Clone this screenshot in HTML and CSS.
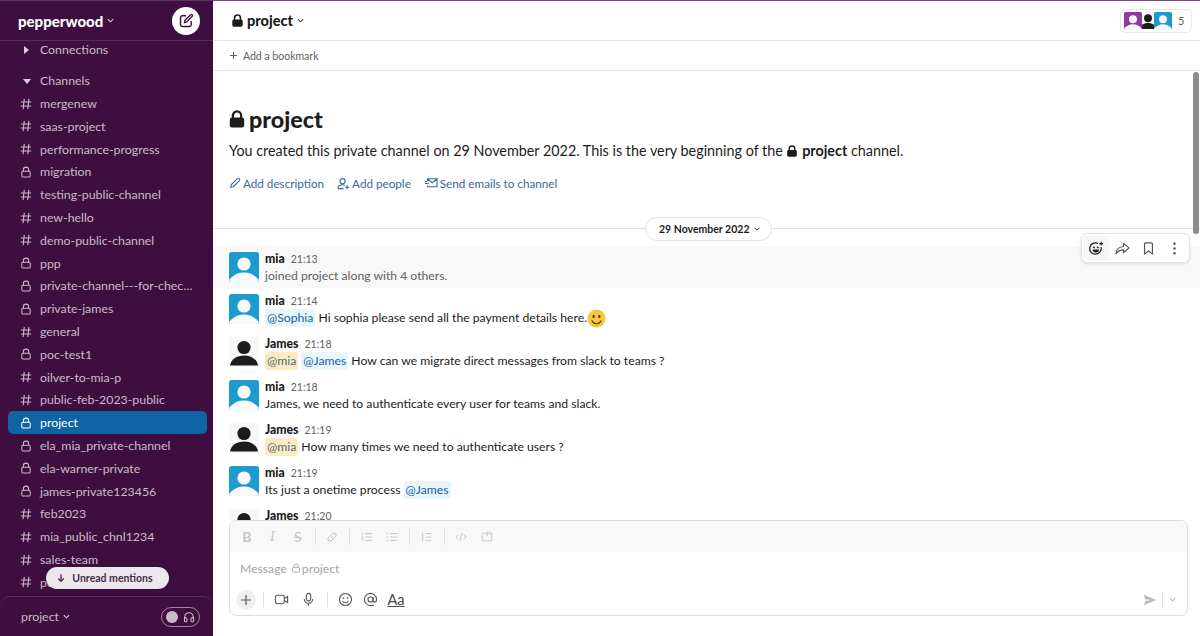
FILE: index.html
```html
<!DOCTYPE html>
<html lang="en">
<head>
<meta charset="utf-8">
<title>project</title>
<link rel="stylesheet" href="styles.css">
</head>
<body>
<svg class="defs" width="0" height="0" aria-hidden="true">
  <symbol id="hash" viewBox="0 0 14 14"><path d="M5 1 3.600 13M10.400 1 9 13M1 4.700h12M1 9.300h12" fill="none" stroke="currentColor" stroke-width="1.250"/></symbol>
  <symbol id="lock" viewBox="0 0 14 14"><path d="M3.900 6V4.400a3.100 3.100 0 0 1 6.200 0V6" fill="none" stroke="currentColor" stroke-width="1.200"/><rect x="2.100" y="6" width="9.800" height="6.900" rx="1.600" fill="none" stroke="currentColor" stroke-width="1.200"/></symbol>
  <symbol id="lockf" viewBox="0 0 14 14"><path d="M3.800 6.500V4.300a3.200 3.200 0 0 1 6.400 0v2.200" fill="none" stroke="currentColor" stroke-width="1.700"/><rect x="1.400" y="5.800" width="11.200" height="7.800" rx="1.700" fill="currentColor"/></symbol>
  <symbol id="chev" viewBox="0 0 10 10"><path d="M2 3.500 5 6.500 8 3.500" fill="none" stroke="currentColor" stroke-width="1.200"/></symbol>
  <symbol id="ava-blue" viewBox="0 0 30 30"><rect width="30" height="30" rx="2.500" fill="#1d9bd1"/><circle cx="15" cy="12" r="6.600" fill="#f8f8f8"/><path d="M0 28c4-5 9-7.500 15-7.500S26 23 30 28v0a2.500 2.500 0 0 1-2.500 2H2.500A2.500 2.500 0 0 1 0 28Z" fill="#f8f8f8"/></symbol>
  <symbol id="ava-purple" viewBox="0 0 30 30"><rect width="30" height="30" rx="2.500" fill="#8f3aa0"/><circle cx="15" cy="12" r="6.600" fill="#f8f8f8"/><path d="M0 28c4-5 9-7.500 15-7.500S26 23 30 28v0a2.500 2.500 0 0 1-2.500 2H2.500A2.500 2.500 0 0 1 0 28Z" fill="#f8f8f8"/></symbol>
  <symbol id="ava-black" viewBox="0 0 30 30"><rect width="30" height="30" rx="2.500" fill="#f8f8f8"/><circle cx="15" cy="10.500" r="6.600" fill="#1d1c1d"/><path d="M1 28.500C2 22 8 18.500 15 18.500S28 22 29 28.500Z" fill="#1d1c1d"/></symbol>
</svg>

<div class="app">
  <aside class="sidebar">
    <header class="side-head">
      <span class="workspace">pepperwood</span>
      <svg class="ws-chev"><use href="#chev"/></svg>
      <button class="compose" aria-label="New message">
        <svg viewBox="0 0 16 16" width="16" height="16"><path d="M8 2.800H4.200A1.700 1.700 0 0 0 2.500 4.500v7.300a1.700 1.700 0 0 0 1.700 1.700h7.300a1.700 1.700 0 0 0 1.700-1.700V8" fill="none" stroke="#3f0e40" stroke-width="1.400"/><path d="M6.500 9.600 7 7.200 12.600 1.700a1 1 0 0 1 1.500 0 1 1 0 0 1 .1 1.500L8.800 9Z" fill="none" stroke="#3f0e40" stroke-width="1.300"/></svg>
      </button>
    </header>
    <nav class="channels">
      <div class="row section first"><span class="tri right"></span><span>Connections</span></div>
      <div class="row section"><span class="tri down"></span><span>Channels</span></div>
      <div class="row"><svg class="ic"><use href="#hash"/></svg><span>mergenew</span></div>
      <div class="row"><svg class="ic"><use href="#hash"/></svg><span>saas-project</span></div>
      <div class="row"><svg class="ic"><use href="#hash"/></svg><span>performance-progress</span></div>
      <div class="row"><svg class="ic"><use href="#lock"/></svg><span>migration</span></div>
      <div class="row"><svg class="ic"><use href="#hash"/></svg><span>testing-public-channel</span></div>
      <div class="row"><svg class="ic"><use href="#hash"/></svg><span>new-hello</span></div>
      <div class="row"><svg class="ic"><use href="#hash"/></svg><span>demo-public-channel</span></div>
      <div class="row"><svg class="ic"><use href="#lock"/></svg><span>ppp</span></div>
      <div class="row"><svg class="ic"><use href="#lock"/></svg><span class="clip">private-channel---for-checking-all</span></div>
      <div class="row"><svg class="ic"><use href="#lock"/></svg><span>private-james</span></div>
      <div class="row"><svg class="ic"><use href="#hash"/></svg><span>general</span></div>
      <div class="row"><svg class="ic"><use href="#lock"/></svg><span>poc-test1</span></div>
      <div class="row"><svg class="ic"><use href="#hash"/></svg><span>oilver-to-mia-p</span></div>
      <div class="row"><svg class="ic"><use href="#hash"/></svg><span>public-feb-2023-public</span></div>
      <div class="row active"><svg class="ic"><use href="#lock"/></svg><span>project</span></div>
      <div class="row"><svg class="ic"><use href="#lock"/></svg><span>ela_mia_private-channel</span></div>
      <div class="row"><svg class="ic"><use href="#lock"/></svg><span>ela-warner-private</span></div>
      <div class="row"><svg class="ic"><use href="#lock"/></svg><span>james-private123456</span></div>
      <div class="row"><svg class="ic"><use href="#hash"/></svg><span>feb2023</span></div>
      <div class="row"><svg class="ic"><use href="#hash"/></svg><span>mia_public_chnl1234</span></div>
      <div class="row"><svg class="ic"><use href="#hash"/></svg><span>sales-team</span></div>
      <div class="row"><svg class="ic"><use href="#hash"/></svg><span>pepper-team</span></div>
    </nav>
    <button class="unread">
      <svg viewBox="0 0 10 10" width="10" height="10"><path d="M5 1.200v7M2.200 5.500 5 8.300l2.800-2.800" fill="none" stroke="currentColor" stroke-width="1.300"/></svg>
      <span>Unread mentions</span>
    </button>
    <footer class="huddle">
      <span class="huddle-name">project</span>
      <svg class="ws-chev small"><use href="#chev"/></svg>
      <span class="toggle">
        <span class="knob"></span>
        <svg viewBox="0 0 14 14" width="12" height="12"><path d="M2 9V7a5 5 0 0 1 10 0v2" fill="none" stroke="currentColor" stroke-width="1.300"/><rect x="1.700" y="8" width="3" height="4.500" rx="1.200" fill="none" stroke="currentColor" stroke-width="1.200"/><rect x="9.300" y="8" width="3" height="4.500" rx="1.200" fill="none" stroke="currentColor" stroke-width="1.200"/></svg>
      </span>
    </footer>
  </aside>

  <main class="main">
    <header class="chan-head">
      <svg class="head-lock"><use href="#lockf"/></svg>
      <span class="chan-name">project</span>
      <svg class="head-chev"><use href="#chev"/></svg>
      <div class="members">
        <svg class="m-ava purple"><use href="#ava-purple"/></svg>
        <svg class="m-ava"><use href="#ava-black"/></svg>
        <svg class="m-ava"><use href="#ava-blue"/></svg>
        <span class="m-count">5</span>
      </div>
    </header>
    <div class="bookmarks">
      <svg viewBox="0 0 10 10" width="9" height="9"><path d="M5 1v8M1 5h8" fill="none" stroke="currentColor" stroke-width="1.200"/></svg>
      <span>Add a bookmark</span>
    </div>
    <section class="scroller">
      <div class="intro">
        <h1 class="intro-title"><svg class="title-lock"><use href="#lockf"/></svg>project</h1>
        <p class="intro-text">You created this private channel on 29 November 2022. This is the very beginning of the <svg class="inline-lock"><use href="#lockf"/></svg> <b>project</b> channel.</p>
        <div class="actions">
          <a class="action"><svg viewBox="0 0 14 14" width="12" height="12"><path d="M2 12 2.700 8.800 9.800 1.900a1.300 1.300 0 0 1 1.900 0l.5.500a1.300 1.300 0 0 1 0 1.800L5.100 11.300Z" fill="none" stroke="currentColor" stroke-width="1.200"/></svg>Add description</a>
          <a class="action"><svg viewBox="0 0 14 14" width="13" height="13"><circle cx="6" cy="4.500" r="2.800" fill="none" stroke="currentColor" stroke-width="1.200"/><path d="M1 12.500c.2-2.800 2.200-4.200 5-4.200 1 0 1.900.2 2.600.5M1 12.500h6M10.800 8.800v4.400M8.600 11h4.400" fill="none" stroke="currentColor" stroke-width="1.200"/></svg>Add people</a>
          <a class="action"><svg viewBox="0 0 14 14" width="14" height="14"><path d="M3.500 5V2.800h9.500v8H3.500V9.500M3.500 3l4.700 3.800L13 3M.8 7.500h4M1 5.500h2" fill="none" stroke="currentColor" stroke-width="1.100"/></svg>Send emails to channel</a>
        </div>
      </div>
      <div class="day"><span class="day-pill">29 November 2022<svg class="day-chev"><use href="#chev"/></svg></span></div>
      <article class="msg hover">
        <svg class="avatar"><use href="#ava-blue"/></svg>
        <div class="body"><div class="meta"><b>mia</b><time>21:13</time></div><div class="text muted">joined project along with 4 others.</div></div>
      </article>
      <article class="msg">
        <svg class="avatar"><use href="#ava-blue"/></svg>
        <div class="body"><div class="meta"><b>mia</b><time>21:14</time></div><div class="text"><span class="mention">@Sophia</span> Hi sophia please send all the payment details here.<svg class="emoji" viewBox="0 0 20 20"><circle cx="10" cy="10" r="9.500" fill="#f7c740"/><ellipse cx="7" cy="7.800" rx="1.200" ry="1.700" fill="#5a3d10"/><ellipse cx="13" cy="7.800" rx="1.200" ry="1.700" fill="#5a3d10"/><path d="M5 12c1.200 2.600 3 3.500 5 3.500s3.800-.9 5-3.500" fill="none" stroke="#5a3d10" stroke-width="1.200"/></svg></div></div>
      </article>
      <article class="msg">
        <svg class="avatar"><use href="#ava-black"/></svg>
        <div class="body"><div class="meta"><b>James</b><time>21:18</time></div><div class="text"><span class="mention self">@mia</span> <span class="mention">@James</span> How can we migrate direct messages from slack to teams ?</div></div>
      </article>
      <article class="msg">
        <svg class="avatar"><use href="#ava-blue"/></svg>
        <div class="body"><div class="meta"><b>mia</b><time>21:18</time></div><div class="text">James, we need to authenticate every user for teams and slack.</div></div>
      </article>
      <article class="msg">
        <svg class="avatar"><use href="#ava-black"/></svg>
        <div class="body"><div class="meta"><b>James</b><time>21:19</time></div><div class="text"><span class="mention self">@mia</span> How many times we need to authenticate users ?</div></div>
      </article>
      <article class="msg">
        <svg class="avatar"><use href="#ava-blue"/></svg>
        <div class="body"><div class="meta"><b>mia</b><time>21:19</time></div><div class="text">Its just a onetime process <span class="mention">@James</span></div></div>
      </article>
      <article class="msg">
        <svg class="avatar"><use href="#ava-black"/></svg>
        <div class="body"><div class="meta"><b>James</b><time>21:20</time></div></div>
      </article>
      <div class="scrollbar"></div>
      <div class="hover-tools">
        <span class="tool on"><svg viewBox="0 0 16 16" width="15" height="15"><path d="M12.800 6.500A6.100 6.100 0 1 1 9.500 2.500" fill="none" stroke="#1d1c1d" stroke-width="1.300"/><circle cx="5.300" cy="6.800" r="1" fill="#1d1c1d"/><circle cx="9.300" cy="6.800" r="1" fill="#1d1c1d"/><path d="M3.900 9h6.800c0 2-1.500 3.300-3.400 3.300S3.900 11 3.900 9Z" fill="#1d1c1d"/><path d="M13 .8v4M11 2.800h4" fill="none" stroke="#1d1c1d" stroke-width="1.200"/></svg></span>
        <span class="tool"><svg viewBox="0 0 16 16" width="15" height="15"><path d="M9.200 2.500 15 7.400l-5.800 4.900V9.500C6 9.500 3.200 10.500 1 13.500c.4-4.700 3.600-7.300 8.200-7.600Z" fill="none" stroke="currentColor" stroke-width="1.200" stroke-linejoin="round"/></svg></span>
        <span class="tool"><svg viewBox="0 0 16 16" width="15" height="15"><path d="M3.800 14V3.300c0-.8.500-1.300 1.300-1.300h5.800c.8 0 1.300.5 1.300 1.300V14L8 10.500Z" fill="none" stroke="currentColor" stroke-width="1.300" stroke-linejoin="round"/></svg></span>
        <span class="tool"><svg viewBox="0 0 16 16" width="15" height="15"><circle cx="8" cy="3" r="1.300" fill="currentColor"/><circle cx="8" cy="8" r="1.300" fill="currentColor"/><circle cx="8" cy="13" r="1.300" fill="currentColor"/></svg></span>
      </div>
    </section>
    <section class="composer-wrap">
      <div class="composer">
        <div class="format">
          <span class="f-glyph bold">B</span>
          <span class="f-glyph ital">I</span>
          <span class="f-glyph strike">S</span>
          <i class="sep"></i>
          <svg class="f-ic" viewBox="0 0 14 14"><path d="M6 8 8.500 5.500M5.500 5 3 7.500a2.400 2.400 0 0 0 3.500 3.500L9 8.500M8.500 9 11 6.500A2.400 2.400 0 0 0 7.500 3L5 5.500" fill="none" stroke="currentColor" stroke-width="1.100"/></svg>
          <i class="sep"></i>
          <svg class="f-ic" viewBox="0 0 14 14"><path d="M5 3h8M5 7h8M5 11h8M1.500 2v2.500M1 7h1.500L1 9h2M1 11h1.500" fill="none" stroke="currentColor" stroke-width="1"/></svg>
          <svg class="f-ic" viewBox="0 0 14 14"><path d="M5 3h8M5 7h8M5 11h8M1 3h1.500M1 7h1.500M1 11h1.500" fill="none" stroke="currentColor" stroke-width="1"/></svg>
          <i class="sep"></i>
          <svg class="f-ic" viewBox="0 0 14 14"><path d="M2 2v10M5.500 3H12M5.500 7H12M5.500 11H12" fill="none" stroke="currentColor" stroke-width="1"/></svg>
          <i class="sep"></i>
          <svg class="f-ic" viewBox="0 0 14 14"><path d="M4 4 1 7l3 3M10 4l3 3-3 3M8.300 2.500 5.700 11.500" fill="none" stroke="currentColor" stroke-width="1"/></svg>
          <svg class="f-ic" viewBox="0 0 14 14"><path d="M1.500 5v6.500h11V3H9M5 3H1.500M7 1.500v4M5.500 2l1.500-.5L7 5.500M9.500 1v2" fill="none" stroke="currentColor" stroke-width="1"/></svg>
        </div>
        <div class="placeholder">Message <svg class="ph-lock"><use href="#lock"/></svg>project</div>
        <div class="compose-bar">
          <span class="plus"><svg viewBox="0 0 12 12" width="12" height="12"><path d="M6 1v10M1 6h10" fill="none" stroke="currentColor" stroke-width="1.200"/></svg></span>
          <i class="sep tall"></i>
          <svg class="b-ic" viewBox="0 0 16 16"><rect x="1.500" y="3.500" width="9.500" height="9" rx="2" fill="none" stroke="currentColor" stroke-width="1.200"/><path d="M11 7l3.500-2.200v6.400L11 9" fill="none" stroke="currentColor" stroke-width="1.200"/></svg>
          <svg class="b-ic mic" viewBox="0 0 16 16"><rect x="5.700" y="1.500" width="4.600" height="8" rx="2.300" fill="none" stroke="currentColor" stroke-width="1.200"/><path d="M3.500 7.500a4.500 4.500 0 0 0 9 0M8 12v2.500" fill="none" stroke="currentColor" stroke-width="1.200"/></svg>
          <i class="sep tall"></i>
          <svg class="b-ic" viewBox="0 0 16 16"><circle cx="8" cy="8" r="6.400" fill="none" stroke="currentColor" stroke-width="1.200"/><circle cx="5.800" cy="6.500" r=".9" fill="currentColor"/><circle cx="10.200" cy="6.500" r=".9" fill="currentColor"/><path d="M4.800 9.500c.8 1.500 2 2 3.200 2s2.400-.5 3.200-2" fill="none" stroke="currentColor" stroke-width="1.100"/></svg>
          <svg class="b-ic" viewBox="0 0 16 16"><circle cx="8" cy="8" r="2.700" fill="none" stroke="currentColor" stroke-width="1.200"/><path d="M10.700 5.300V9c0 1.200.8 1.800 1.600 1.800 1.100 0 2.200-1 2.200-2.800a6.500 6.500 0 1 0-3 5.500" fill="none" stroke="currentColor" stroke-width="1.200"/></svg>
          <span class="aa">Aa</span>
          <span class="send">
            <svg viewBox="0 0 16 16" width="14" height="14"><path d="M1 2 15 8 1 14l1.500-5L9 8 2.500 7Z" fill="#b9b9b9"/></svg>
            <i class="sep send-sep"></i>
            <svg class="send-chev"><use href="#chev"/></svg>
          </span>
        </div>
      </div>
    </section>
  </main>
</div>
</body>
</html>
```

FILE: styles.css
```css
* { box-sizing: border-box; }
html, body { margin: 0; height: 100%; overflow: hidden; }
body { font-family: Lato, "Liberation Sans", sans-serif; color: #1d1c1d; background: #fff; }
.defs { position: absolute; }
button { font: inherit; border: 0; padding: 0; }
svg { display: block; flex: none; }

.app { display: flex; width: 1200px; height: 636px; }

/* sidebar */
.sidebar { position: relative; width: 213px; flex: none; background: #3f0e40; color: rgba(255,255,255,.7); display: flex; flex-direction: column; }
.side-head { height: 41px; flex: none; display: flex; align-items: center; padding: 0 13px 0 18px; border-top: 1px solid #5b3a5c; border-bottom: 1px solid #553057; }
.workspace { color: #fff; font-weight: 900; font-size: 15px; }
.ws-chev { width: 9px; height: 9px; margin-left: 3px; color: #dccfdc; }
.compose { margin-left: auto; width: 28px; height: 28px; border-radius: 50%; background: #fff; display: flex; align-items: center; justify-content: center; }
.channels { flex: 1; min-height: 0; overflow: hidden; }
.row { height: 22.800px; display: flex; align-items: center; margin: 0 6px 0 8px; padding-left: 12px; font-size: 12.350px; gap: 8px; color: rgba(255,255,255,.72); }
.row > span:last-child { white-space: nowrap; }
.row .clip { overflow: hidden; text-overflow: ellipsis; max-width: 158px; }
.row .ic { width: 12px; height: 12px; color: rgba(255,255,255,.72); }
.row.active { background: #1164a3; border-radius: 5px; color: #fff; }
.row.active .ic { color: #fff; }
.section.first { height: 17px; margin-bottom: 11.400px; }
.tri { width: 12px; height: 10px; flex: none; position: relative; }
.tri::after { content: ""; position: absolute; border-style: solid; border-color: transparent; }
.tri.right::after { left: 4px; top: 1px; border-width: 4px 0 4px 5px; border-left-color: #d9cfd9; }
.tri.down::after { left: 3px; top: 3px; border-width: 5px 4px 0 4px; border-top-color: #d9cfd9; }

.unread { position: absolute; left: 46px; top: 567px; width: 123px; height: 22px; padding: 0 6px 1px 0; border-radius: 11px; background: #ece7ec; color: #4a2a4c; display: flex; align-items: center; justify-content: center; gap: 6px; font-size: 10.500px; font-weight: 700; }
.huddle { height: 40px; flex: none; margin-top: -1px; display: flex; align-items: center; padding: 0 13px 0 21px; background: #3f0e40; border-top: 1px solid #553057; border-radius: 10px 10px 0 0; position: relative; font-size: 12.350px; color: rgba(255,255,255,.72); }
.ws-chev.small { margin-left: 3px; }
.toggle { margin-left: auto; width: 39px; height: 20px; border: 1px solid rgba(255,255,255,.5); border-radius: 10px; display: flex; align-items: center; justify-content: space-between; padding: 0 4px; }
.knob { width: 12px; height: 12px; border-radius: 50%; background: #c9b9c9; }

/* main */
.main { flex: 1; min-width: 0; display: flex; flex-direction: column; border-top: 1px solid #7c4a80; }
.chan-head { height: 40px; flex: none; display: flex; align-items: center; padding: 0 8px 0 18px; border-bottom: 1px solid #e6e6e6; }
.head-lock { width: 13px; height: 13px; }
.chan-name { margin-left: 3px; font-size: 14.500px; font-weight: 900; }
.head-chev { width: 9px; height: 9px; margin-left: 3px; color: #444; }
.members { margin-left: auto; height: 24px; width: 72px; display: flex; align-items: center; padding-left: 3px; border: 1px solid #e8e8e8; border-radius: 5px; }
.m-ava { width: 18px; height: 18px; margin-left: -3px; }
.m-ava.purple { margin-left: 0; position: relative; z-index: 1; }
.m-count { margin-left: 6px; font-size: 11px; color: #616061; }
.bookmarks { height: 30px; flex: none; display: flex; align-items: center; gap: 5px; padding-left: 16px; font-size: 10.500px; color: #616061; border-bottom: 1px solid #e6e6e6; }

.scroller { position: relative; flex: 1; min-height: 0; overflow: hidden; }
.intro { padding: 35px 16px 0; height: 146px; }
.intro-title { margin: 0; display: flex; align-items: center; gap: 3px; font-size: 23.300px; line-height: 26px; font-weight: 900; }
.title-lock { width: 18px; height: 18px; margin-left: -1px; }
.intro-text { margin: 9px 0 0; font-size: 14.350px; line-height: 20px; color: #1d1c1d; }
.intro-text b { font-weight: 700; }
.inline-lock { display: inline-block; width: 12px; height: 12px; vertical-align: -1px; }
.actions { display: flex; gap: 13px; margin-top: 15px; }
.action { display: flex; align-items: center; gap: 2px; font-size: 11.700px; color: #35689b; }
.day { position: relative; height: 24px; display: flex; justify-content: center; }
.day::before { content: ""; position: absolute; left: 0; right: 0; top: 11px; border-top: 1px solid #e2e2e2; }
.day-pill { position: relative; height: 24px; width: 127px; margin-left: 4px; padding-left: 13px; display: flex; align-items: center; gap: 4px; background: #fff; border: 1px solid #e2e2e2; border-radius: 12px; font-size: 10.500px; font-weight: 700; color: #1d1c1d; }
.day-chev { width: 8px; height: 8px; }
.msg { display: flex; gap: 6px; padding: 6px 16px 0; height: 43px; }
.msg.hover { background: #f8f8f8; margin-top: 5px; height: 42px; }
.avatar { width: 30px; height: 30px; }
.body { min-width: 0; }
.meta { display: flex; align-items: baseline; gap: 6px; height: 14px; line-height: 14px; font-size: 12.200px; }
.meta b { font-weight: 900; }
.meta time { font-size: 10.500px; color: #616061; }
.text { white-space: pre-wrap; min-height: 20px; line-height: 20px; font-size: 12.200px; color: #1d1c1d; }
.text.muted { color: #616061; }
.mention { display: inline-block; padding: 0 2px; height: 18px; line-height: 18px; background: #e8f5fa; color: #1264a3; border-radius: 3px; }
.mention.self { background: #fcebc0; color: #4f6a80; }
.emoji { display: inline-block; width: 19px; height: 19px; vertical-align: -6px; }
.scrollbar { position: absolute; right: 1px; top: 1px; width: 6px; height: 162px; background: #8c8c8c; border-radius: 3px; }
.hover-tools { position: absolute; left: 868px; top: 162px; width: 109px; height: 30px; display: flex; align-items: center; padding: 1px; background: #fff; border: 1px solid #e2e2e2; border-radius: 6px; box-shadow: 0 1px 3px rgba(0,0,0,.1); }
.tool { width: 26px; height: 26px; display: flex; align-items: center; justify-content: center; color: #555; }
.tool.on { background: #f6f6f6; border-radius: 4px; color: #1d1c1d; }

/* composer */
.composer-wrap { flex: none; height: 116px; padding: 0 12px 20px 16px; }
.composer { height: 96px; border: 1px solid #dcdcdc; border-radius: 7px; overflow: hidden; display: flex; flex-direction: column; background: #fff; }
.format { height: 31px; flex: none; background: #f8f8f8; display: flex; align-items: center; padding-left: 4px; color: #bdbdbd; }
.f-glyph { width: 25.500px; flex: none; text-align: center; font-size: 14px; color: #c6c6c6; }
.bold { font-weight: 700; }
.ital { font-style: italic; font-family: "Liberation Serif", serif; }
.strike { text-decoration: line-through; font-weight: 400; }
.sep { display: block; width: 1px; height: 16px; background: #e0e0e0; flex: none; }
.format .sep { margin: 0 4px; }
.f-ic { width: 12px; height: 12px; margin: 0 6.750px; }
.placeholder { height: 32px; flex: none; display: flex; align-items: center; padding-left: 10px; font-size: 12.200px; color: #a3a3a3; }
.ph-lock { width: 10px; height: 10px; margin: 0 1px 0 4px; }
.compose-bar { flex: 1; display: flex; align-items: center; padding: 0 10px 0 6px; gap: 10px; color: #555; }
.plus { width: 20px; height: 20px; border-radius: 50%; background: #f0f0f0; display: flex; align-items: center; justify-content: center; }
.sep.tall { height: 15px; margin-left: -3px; }
.b-ic { width: 15px; height: 15px; }
.b-ic.mic { margin: 0 3.500px 0 2px; }
.aa { font-size: 14.500px; color: #444; text-decoration: underline; }
.send { margin-left: auto; display: flex; align-items: center; gap: 5px; color: #b9b9b9; }
.send-sep { height: 15px; }
.send-chev { width: 9px; height: 9px; }
```
